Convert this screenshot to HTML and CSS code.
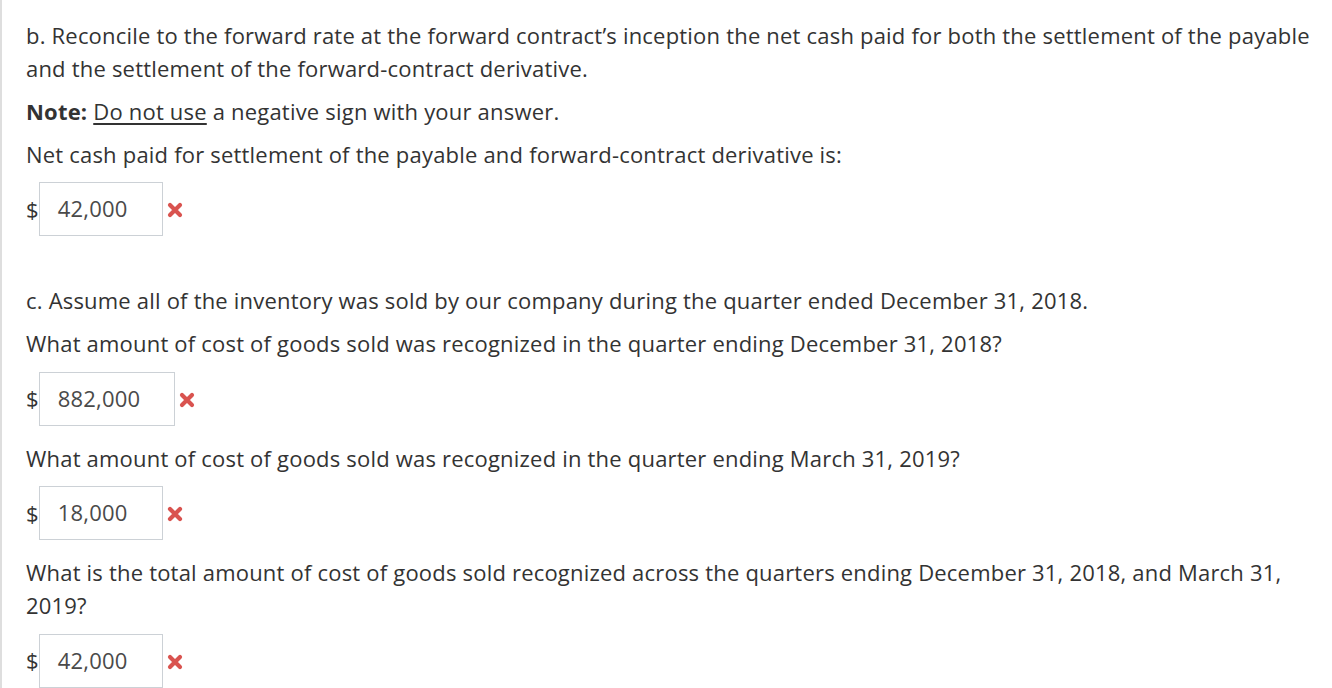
FILE: index.html
```html
<!DOCTYPE html>
<html lang="en">
<head>
<meta charset="utf-8">
<title>Forward contract questions</title>
<link rel="stylesheet" href="styles.css">
</head>
<body>
<div class="page">
  <section class="part part-b">
    <p class="text">b. Reconcile to the forward rate at the forward contract’s inception the net cash paid for both the settlement of the payable and the settlement of the forward-contract derivative.</p>
    <p class="text"><strong>Note:</strong> <u>Do not use</u> a negative sign with your answer.</p>
    <p class="text">Net cash paid for settlement of the payable and forward-contract derivative is:</p>
    <div class="answer">
      <span class="currency">$</span><span class="answer-box">42,000</span>
      <svg class="wrong" viewBox="0 0 16 16" width="16" height="16" aria-hidden="true"><path d="M3 3 L13 13 M13 3 L3 13" stroke="#d9534f" stroke-width="4.2" stroke-linecap="round"/></svg>
    </div>
  </section>

  <section class="part part-c">
    <p class="text">c. Assume all of the inventory was sold by our company during the quarter ended December 31, 2018.</p>
    <p class="text">What amount of cost of goods sold was recognized in the quarter ending December 31, 2018?</p>
    <div class="answer">
      <span class="currency">$</span><span class="answer-box">882,000</span>
      <svg class="wrong" viewBox="0 0 16 16" width="16" height="16" aria-hidden="true"><path d="M3 3 L13 13 M13 3 L3 13" stroke="#d9534f" stroke-width="4.2" stroke-linecap="round"/></svg>
    </div>
    <p class="text question">What amount of cost of goods sold was recognized in the quarter ending March 31, 2019?</p>
    <div class="answer">
      <span class="currency">$</span><span class="answer-box">18,000</span>
      <svg class="wrong" viewBox="0 0 16 16" width="16" height="16" aria-hidden="true"><path d="M3 3 L13 13 M13 3 L3 13" stroke="#d9534f" stroke-width="4.2" stroke-linecap="round"/></svg>
    </div>
    <p class="text question">What is the total amount of cost of goods sold recognized across the quarters ending December 31, 2018, and March 31, 2019?</p>
    <div class="answer">
      <span class="currency">$</span><span class="answer-box">42,000</span>
      <svg class="wrong" viewBox="0 0 16 16" width="16" height="16" aria-hidden="true"><path d="M3 3 L13 13 M13 3 L3 13" stroke="#d9534f" stroke-width="4.2" stroke-linecap="round"/></svg>
    </div>
  </section>
</div>
</body>
</html>
```

FILE: styles.css
```css
html, body {
  margin: 0;
  padding: 0;
  background: #ffffff;
}

body {
  font-family: "Open Sans", "DejaVu Sans", sans-serif;
  font-size: 22px;
  line-height: 33px;
  letter-spacing: 0.2px;
  color: #333333;
}

.page {
  border-left: 2px solid #dedede;
  padding: 18.5px 10px 0 24px;
  min-height: 688px;
  box-sizing: border-box;
}

.text {
  margin: 0 0 10px 0;
}

.text strong {
  font-weight: 700;
}

.text u {
  text-decoration: underline;
  text-underline-offset: 3px;
  text-decoration-thickness: 1.5px;
}

.part-c {
  margin-top: 48px;
}

.question {
  margin-top: 16px;
}

.answer {
  display: flex;
  align-items: center;
  margin-top: 11.5px;
}

.currency {
  color: #333333;
}

.answer-box {
  display: inline-block;
  border: 1px solid #ccd1d6;
  padding: 9px 34px 10px 18px;
  color: #4a4a4a;
  background: #ffffff;
}

.wrong {
  display: block;
  margin-left: 4px;
  margin-top: 2px;
}
```
